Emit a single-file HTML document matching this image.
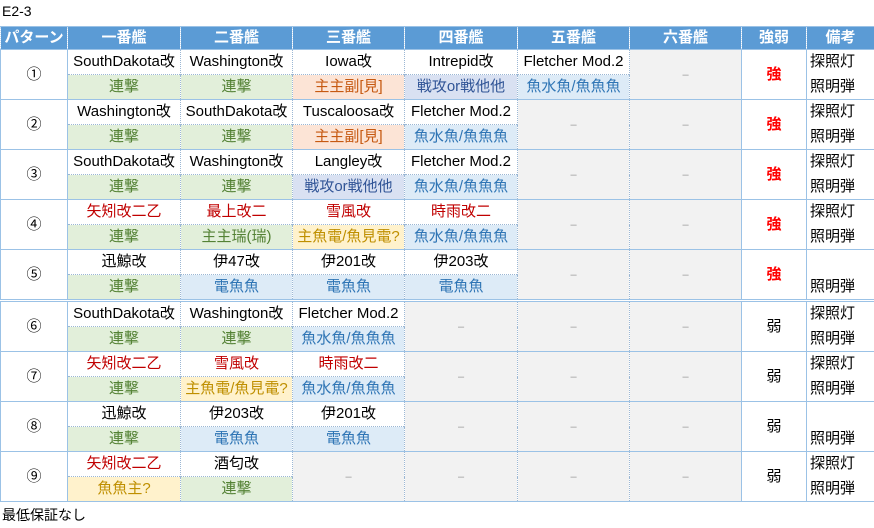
<!DOCTYPE html>
<html><head><meta charset="utf-8"><style>
body{margin:0;background:#fff;font-family:"Liberation Sans","Noto Sans CJK JP",sans-serif;font-size:14px;color:#000;width:874px;height:528px;overflow:hidden;position:relative}
.t{position:absolute;left:2px;top:3px;font-size:14px}
.f{position:absolute;left:2px;top:505px;font-size:14px}
table{position:absolute;left:0;top:26px;width:874px;border-collapse:collapse;table-layout:fixed;border-bottom:1px solid #9bc2e6}
td,th{padding:0;text-align:center;white-space:nowrap;overflow:hidden;height:24px;line-height:24px;border-left:1px dotted #9bb7d4;border-right:1px dotted #9bb7d4;font-size:15px}
th{background:#5b9bd5;color:#fff;font-weight:bold;height:22px;line-height:22px;border-left:1px dotted #cfe0f2;border-right:1px dotted #cfe0f2;border-top:1px solid #9bc2e6}
tr.a td{border-top:1px solid #9bc2e6}
tr.b td{border-top:1px dotted #9bb7d4}
tr.d td{border-top:3px double #9bc2e6}
td.p,td.s{border-left:1px solid #9bc2e6;border-right:1px solid #9bc2e6}
td.n{border-right:1px solid #9bc2e6;border-left:1px solid #9bc2e6;text-align:left;padding-left:3px}
tr.b td.n{border-top:none}
.g{background:#e2efda;color:#548235}
.bl{background:#ddebf7;color:#2f75b5}
.o{background:#fce4d6;color:#c65911}
.pu{background:#d9e1f2;color:#305496}
.y{background:#fff2cc;color:#bf8f00}
.e{background:#f2f2f2;color:#999;font-size:11px}
.r{color:#c00000}
.st{color:#f00;font-weight:bold}
tr.last td,td.lb{border-bottom:1px solid #9bc2e6}
</style></head><body>
<div class="t">E2-3</div>
<table>
<colgroup><col style="width:67px"><col style="width:113px"><col style="width:112px"><col style="width:112px"><col style="width:113px"><col style="width:112px"><col style="width:112px"><col style="width:65px"><col style="width:68px"></colgroup>
<tr><th>パターン</th><th>一番艦</th><th>二番艦</th><th>三番艦</th><th>四番艦</th><th>五番艦</th><th>六番艦</th><th>強弱</th><th>備考</th></tr>

<tr class="a"><td class="p" rowspan="2">①</td><td>SouthDakota改</td><td>Washington改</td><td>Iowa改</td><td>Intrepid改</td><td>Fletcher Mod.2</td><td class="e" rowspan="2">–</td><td class="s st" rowspan="2">強</td><td class="n">探照灯</td></tr>
<tr class="b"><td class="g">連撃</td><td class="g">連撃</td><td class="o">主主副[見]</td><td class="pu">戦攻or戦他他</td><td class="bl">魚水魚/魚魚魚</td><td class="n">照明弾</td></tr>

<tr class="a"><td class="p" rowspan="2">②</td><td>Washington改</td><td>SouthDakota改</td><td>Tuscaloosa改</td><td>Fletcher Mod.2</td><td class="e" rowspan="2">–</td><td class="e" rowspan="2">–</td><td class="s st" rowspan="2">強</td><td class="n">探照灯</td></tr>
<tr class="b"><td class="g">連撃</td><td class="g">連撃</td><td class="o">主主副[見]</td><td class="bl">魚水魚/魚魚魚</td><td class="n">照明弾</td></tr>

<tr class="a"><td class="p" rowspan="2">③</td><td>SouthDakota改</td><td>Washington改</td><td>Langley改</td><td>Fletcher Mod.2</td><td class="e" rowspan="2">–</td><td class="e" rowspan="2">–</td><td class="s st" rowspan="2">強</td><td class="n">探照灯</td></tr>
<tr class="b"><td class="g">連撃</td><td class="g">連撃</td><td class="pu">戦攻or戦他他</td><td class="bl">魚水魚/魚魚魚</td><td class="n">照明弾</td></tr>

<tr class="a"><td class="p" rowspan="2">④</td><td class="r">矢矧改二乙</td><td class="r">最上改二</td><td class="r">雪風改</td><td class="r">時雨改二</td><td class="e" rowspan="2">–</td><td class="e" rowspan="2">–</td><td class="s st" rowspan="2">強</td><td class="n">探照灯</td></tr>
<tr class="b"><td class="g">連撃</td><td class="g">主主瑞(瑞)</td><td class="y">主魚電/魚見電?</td><td class="bl">魚水魚/魚魚魚</td><td class="n">照明弾</td></tr>

<tr class="a"><td class="p" rowspan="2">⑤</td><td>迅鯨改</td><td>伊47改</td><td>伊201改</td><td>伊203改</td><td class="e" rowspan="2">–</td><td class="e" rowspan="2">–</td><td class="s st" rowspan="2">強</td><td class="n"></td></tr>
<tr class="b"><td class="g">連撃</td><td class="bl">電魚魚</td><td class="bl">電魚魚</td><td class="bl">電魚魚</td><td class="n">照明弾</td></tr>

<tr class="d"><td class="p" rowspan="2">⑥</td><td>SouthDakota改</td><td>Washington改</td><td>Fletcher Mod.2</td><td class="e" rowspan="2">–</td><td class="e" rowspan="2">–</td><td class="e" rowspan="2">–</td><td class="s" rowspan="2">弱</td><td class="n">探照灯</td></tr>
<tr class="b"><td class="g">連撃</td><td class="g">連撃</td><td class="bl">魚水魚/魚魚魚</td><td class="n">照明弾</td></tr>

<tr class="a"><td class="p" rowspan="2">⑦</td><td class="r">矢矧改二乙</td><td class="r">雪風改</td><td class="r">時雨改二</td><td class="e" rowspan="2">–</td><td class="e" rowspan="2">–</td><td class="e" rowspan="2">–</td><td class="s" rowspan="2">弱</td><td class="n">探照灯</td></tr>
<tr class="b"><td class="g">連撃</td><td class="y">主魚電/魚見電?</td><td class="bl">魚水魚/魚魚魚</td><td class="n">照明弾</td></tr>

<tr class="a"><td class="p" rowspan="2">⑧</td><td>迅鯨改</td><td>伊203改</td><td>伊201改</td><td class="e" rowspan="2">–</td><td class="e" rowspan="2">–</td><td class="e" rowspan="2">–</td><td class="s" rowspan="2">弱</td><td class="n"></td></tr>
<tr class="b"><td class="g">連撃</td><td class="bl">電魚魚</td><td class="bl">電魚魚</td><td class="n">照明弾</td></tr>

<tr class="a"><td class="p lb" rowspan="2">⑨</td><td class="r">矢矧改二乙</td><td>酒匂改</td><td class="e lb" rowspan="2">–</td><td class="e lb" rowspan="2">–</td><td class="e lb" rowspan="2">–</td><td class="e lb" rowspan="2">–</td><td class="s lb" rowspan="2">弱</td><td class="n">探照灯</td></tr>
<tr class="b last"><td class="y">魚魚主?</td><td class="g">連撃</td><td class="n">照明弾</td></tr>
</table>
<div class="f">最低保証なし</div>
</body></html>
